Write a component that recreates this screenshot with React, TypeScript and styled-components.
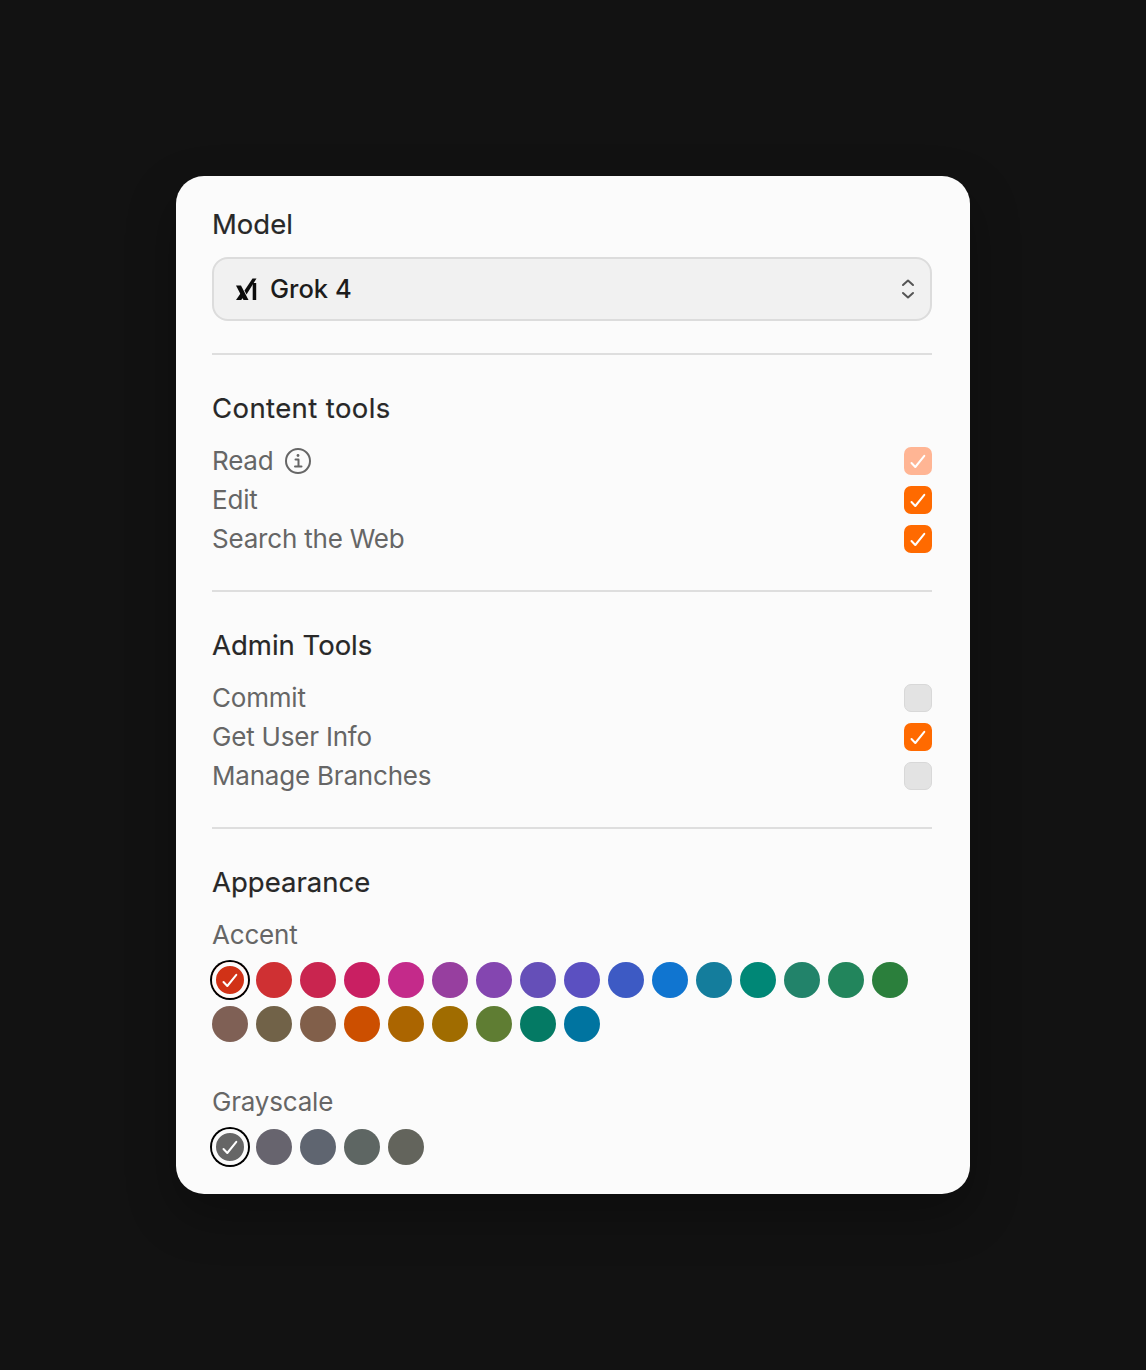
import React from 'react';
import styled, { createGlobalStyle } from 'styled-components';

const GlobalStyle = createGlobalStyle`
  html, body {
    margin: 0;
    padding: 0;
    background: #121212;
  }
  * {
    box-sizing: border-box;
  }
`;

const Page = styled.div`
  width: 100%;
  min-height: 1370px;
  background: #121212;
  padding-top: 176px;
  display: flex;
  justify-content: center;
  font-family: Inter, "Liberation Sans", sans-serif;
`;

const Panel = styled.div`
  width: 794px;
  height: 1018px;
  padding: 32px 38px 0 36px;
  background: #fbfbfb;
  border-radius: 28px;
  box-shadow: 0 20px 50px rgba(0, 0, 0, 0.3);
`;

const Heading = styled.div<{ $tracking?: number }>`
  font-size: 27.5px;
  line-height: 33px;
  font-weight: 400;
  letter-spacing: ${(p) => p.$tracking ?? 0}px;
  color: #282828;
  -webkit-text-stroke: 0.2px #282828;
`;

const Select = styled.div`
  margin-top: 16px;
  height: 64px;
  display: flex;
  align-items: center;
  padding: 0 14px 0 22px;
  background: #f1f1f1;
  border: 2px solid #dcdcdc;
  border-radius: 16px;
  font-size: 25.5px;
  font-weight: 500;
  color: #1c1c1c;
  gap: 12px;
`;

const SelectValue = styled.span`
  position: relative;
  top: -1px;
`;

const Grow = styled.div`
  flex: 1;
`;

const Divider = styled.div`
  height: 2px;
  background: #dedede;
  margin: 32px 0 37px;
`;

const Rows = styled.div`
  margin-top: 16px;
  display: flex;
  flex-direction: column;
`;

const Row = styled.div`
  height: 39px;
  display: flex;
  align-items: center;
  justify-content: space-between;
`;

const Label = styled.div`
  display: flex;
  align-items: center;
  gap: 11px;
  font-size: 26px;
  letter-spacing: -0.2px;
  color: #666666;
`;

const Box = styled.div<{ $on: boolean; $faded?: boolean }>`
  width: 28px;
  height: 28px;
  border-radius: 7px;
  display: flex;
  align-items: center;
  justify-content: center;
  background: ${(p) => (p.$faded ? '#ffb594' : p.$on ? '#ff6a00' : '#e3e3e3')};
  border: ${(p) => (p.$on ? 'none' : '1px solid #d8d8d8')};
`;

const SubLabel = styled.div`
  font-size: 26px;
  line-height: 34px;
  letter-spacing: -0.2px;
  color: #666666;
`;

const AccentLabel = styled(SubLabel)`
  margin-top: 19px;
`;

const Swatches = styled.div`
  margin-top: 10px;
  display: flex;
  flex-wrap: wrap;
  gap: 8px;
  width: 720px;
`;

const Swatch = styled.div<{ $color: string; $selected?: boolean }>`
  width: 36px;
  height: 36px;
  border-radius: 50%;
  display: flex;
  align-items: center;
  justify-content: center;
  background: ${(p) => p.$color};
  box-shadow: ${(p) =>
    p.$selected ? `inset 0 0 0 4px #fbfbfb, 0 0 0 2px #000` : 'none'};
`;

const GraySection = styled.div`
  margin-top: 43px;
`;

const Check = () => (
  <svg width="18" height="18" viewBox="0 0 18 18" fill="none">
    <path d="M2.500 11 L6.300 15 L15.300 3.800" stroke="#fff" strokeWidth="2" strokeLinecap="round" strokeLinejoin="round" />
  </svg>
);

const GrokIcon = () => (
  <svg width="22" height="24" viewBox="0 0 22 24" fill="#0c0c0c">
    <path d="M0 8.500H5L12.500 23H7.500z" />
    <path d="M0 23 5.200 15.500 7.800 19.700 5.200 23z" />
    <path d="M16.500 1.500H20.500L10.500 17.500 8.500 13.500z" />
    <rect x="16.700" y="6" width="3.500" height="17" />
  </svg>
);

const Chevrons = () => (
  <svg width="16" height="24" viewBox="0 0 16 24" fill="none" stroke="#555" strokeWidth="2" strokeLinecap="round" strokeLinejoin="round">
    <path d="M3 8 8 3.500 13 8" />
    <path d="M3 16 8 20.500 13 16" />
  </svg>
);

const InfoIcon = () => (
  <svg width="28" height="28" viewBox="0 0 28 28" fill="none" stroke="#666666" strokeWidth="2">
    <circle cx="14" cy="14" r="12" />
    <circle cx="14" cy="8.500" r="1.400" fill="#666666" stroke="none" />
    <path d="M11.500 12.500H14.500V19.500M11 19.500H17.500" strokeLinecap="round" strokeLinejoin="round" />
  </svg>
);

const accent = [
  '#d13217', '#cf3033', '#c9254f', '#c91f62', '#c42a8a', '#973f9f', '#8446b0', '#654fb8',
  '#5b50c1', '#3d5ac4', '#1075d0', '#147d9c', '#008776', '#22836a', '#22855c', '#2b7f3c',
  '#7f6055', '#716248', '#815f4a', '#cc4f00', '#ab6500', '#a06c00', '#5f7d33', '#047a64', '#0074a0',
];
const gray = ['#666666', '#67646e', '#5f6570', '#5e6663', '#63645c'];

const tools = [
  {
    title: 'Content tools',
    tracking: 0.4,
    rows: [
      { name: 'Read', on: true, faded: true, info: true },
      { name: 'Edit', on: true },
      { name: 'Search the Web', on: true },
    ],
  },
  {
    title: 'Admin Tools',
    tracking: 0,
    rows: [
      { name: 'Commit', on: false },
      { name: 'Get User Info', on: true },
      { name: 'Manage Branches', on: false },
    ],
  },
];

const App: React.FC = () => {
  return (
    <Page>
      <GlobalStyle />
      <Panel>
        <Heading>Model</Heading>
        <Select>
          <GrokIcon />
          <SelectValue>Grok 4</SelectValue>
          <Grow />
          <Chevrons />
        </Select>
        <Divider />
        {tools.map((group) => (
          <React.Fragment key={group.title}>
            <Heading $tracking={group.tracking}>{group.title}</Heading>
            <Rows>
              {group.rows.map((row) => (
                <Row key={row.name}>
                  <Label>
                    {row.name}
                    {row.info && <InfoIcon />}
                  </Label>
                  <Box $on={row.on} $faded={row.faded}>
                    {row.on && <Check />}
                  </Box>
                </Row>
              ))}
            </Rows>
            <Divider />
          </React.Fragment>
        ))}
        <Heading>Appearance</Heading>
        <AccentLabel>Accent</AccentLabel>
        <Swatches>
          {accent.map((c, i) => (
            <Swatch key={c} $color={c} $selected={i === 0}>
              {i === 0 && <Check />}
            </Swatch>
          ))}
        </Swatches>
        <GraySection>
          <SubLabel>Grayscale</SubLabel>
          <Swatches>
            {gray.map((c, i) => (
              <Swatch key={c} $color={c} $selected={i === 0}>
                {i === 0 && <Check />}
              </Swatch>
            ))}
          </Swatches>
        </GraySection>
      </Panel>
    </Page>
  );
};

export default App;
